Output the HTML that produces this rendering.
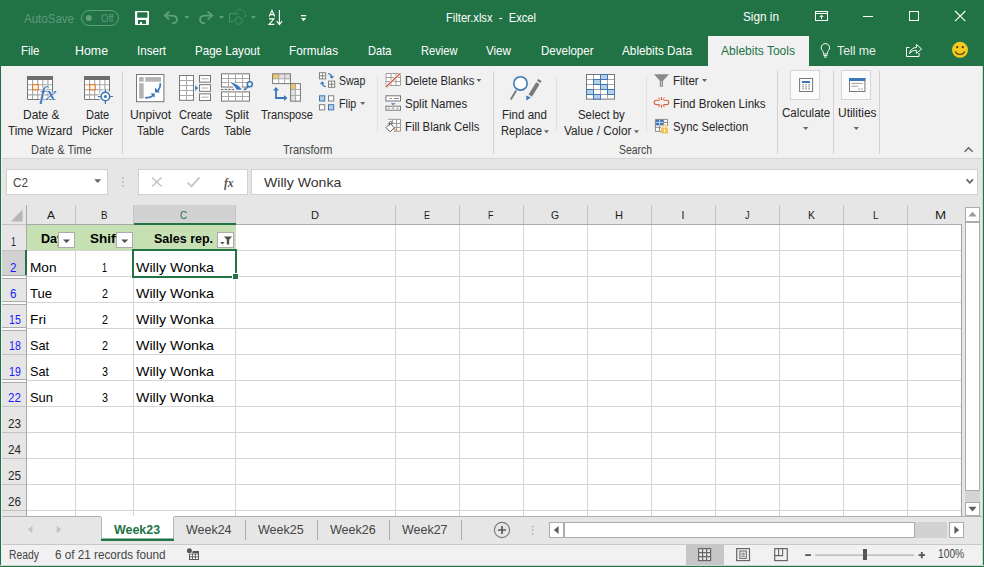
<!DOCTYPE html>
<html><head><meta charset="utf-8"><title>Filter.xlsx - Excel</title>
<style>
html,body{margin:0;padding:0;}
body{width:984px;height:567px;overflow:hidden;position:relative;background:#e6e6e6;font-family:"Liberation Sans",sans-serif;}
.t{position:absolute;white-space:pre;line-height:1em;transform-origin:0 0;}
.r{position:absolute;box-sizing:border-box;}
svg{position:absolute;overflow:visible;}
</style></head><body>
<div class="r" style="left:0px;top:0px;width:984px;height:66px;background:#217346;"></div>
<div class="r" style="left:0px;top:66px;width:984px;height:93px;background:#f1f1f1;"></div>
<div class="r" style="left:0px;top:158px;width:984px;height:1px;background:#d6d6d6;"></div>
<div class="r" style="left:0px;top:159px;width:984px;height:46px;background:#e6e6e6;"></div>
<div class="r" style="left:708px;top:36px;width:101px;height:30px;background:#f1f1f1;"></div>
<span class="t" style="left:24.00px;top:12.00px;font-size:13px;color:#5f9a7b;transform:scaleX(0.8869);">AutoSave</span>
<span class="t" style="left:100.50px;top:13.19px;font-size:11px;color:#5f9a7b;transform:scaleX(0.8621);">Off</span>
<span class="t" style="left:446.00px;top:10.90px;font-size:13px;color:#fff;transform:scaleX(0.8592);">Filter.xlsx  -  Excel</span>
<span class="t" style="left:743.00px;top:9.90px;font-size:13px;color:#fff;transform:scaleX(0.9057);">Sign in</span>
<span class="t" style="left:21.00px;top:44.00px;font-size:13px;color:#fff;transform:scaleX(0.8810);">File</span>
<span class="t" style="left:75.00px;top:44.00px;font-size:13px;color:#fff;transform:scaleX(0.9531);">Home</span>
<span class="t" style="left:137.00px;top:44.00px;font-size:13px;color:#fff;transform:scaleX(0.8923);">Insert</span>
<span class="t" style="left:195.00px;top:44.00px;font-size:13px;color:#fff;transform:scaleX(0.8904);">Page Layout</span>
<span class="t" style="left:289.00px;top:44.00px;font-size:13px;color:#fff;transform:scaleX(0.9053);">Formulas</span>
<span class="t" style="left:367.50px;top:44.00px;font-size:13px;color:#fff;transform:scaleX(0.8545);">Data</span>
<span class="t" style="left:420.50px;top:44.00px;font-size:13px;color:#fff;transform:scaleX(0.8538);">Review</span>
<span class="t" style="left:486.00px;top:44.00px;font-size:13px;color:#fff;transform:scaleX(0.8929);">View</span>
<span class="t" style="left:540.50px;top:44.00px;font-size:13px;color:#fff;transform:scaleX(0.8861);">Developer</span>
<span class="t" style="left:622.00px;top:44.00px;font-size:13px;color:#fff;transform:scaleX(0.9047);">Ablebits Data</span>
<span class="t" style="left:721.00px;top:44.00px;font-size:13px;color:#217346;transform:scaleX(0.9250);">Ablebits Tools</span>
<span class="t" style="left:837.40px;top:44.00px;font-size:13px;color:#e4efe8;transform:scaleX(0.9459);">Tell me</span>
<span class="t" style="left:22.50px;top:108.59px;font-size:12px;color:#262626;transform:scaleX(0.9966);">Date &amp;</span>
<span class="t" style="left:8.00px;top:125.24px;font-size:12px;color:#262626;transform:scaleX(0.9645);">Time Wizard</span>
<span class="t" style="left:85.75px;top:108.59px;font-size:12px;color:#262626;transform:scaleX(0.9163);">Date</span>
<span class="t" style="left:82.00px;top:125.24px;font-size:12px;color:#262626;transform:scaleX(0.9288);">Picker</span>
<span class="t" style="left:30.50px;top:143.59px;font-size:12px;color:#444;transform:scaleX(0.9167);">Date &amp; Time</span>
<span class="t" style="left:129.50px;top:108.59px;font-size:12px;color:#262626;transform:scaleX(1.0123);">Unpivot</span>
<span class="t" style="left:136.75px;top:125.24px;font-size:12px;color:#262626;transform:scaleX(0.9391);">Table</span>
<span class="t" style="left:178.75px;top:108.59px;font-size:12px;color:#262626;transform:scaleX(0.9236);">Create</span>
<span class="t" style="left:180.50px;top:125.24px;font-size:12px;color:#262626;transform:scaleX(0.9062);">Cards</span>
<span class="t" style="left:225.00px;top:108.59px;font-size:12px;color:#262626;transform:scaleX(1.0267);">Split</span>
<span class="t" style="left:223.50px;top:125.24px;font-size:12px;color:#262626;transform:scaleX(0.9391);">Table</span>
<span class="t" style="left:261.00px;top:108.59px;font-size:12px;color:#262626;transform:scaleX(0.9244);">Transpose</span>
<span class="t" style="left:338.75px;top:74.84px;font-size:12px;color:#262626;transform:scaleX(0.8750);">Swap</span>
<span class="t" style="left:338.75px;top:97.84px;font-size:12px;color:#262626;transform:scaleX(0.8903);">Flip</span>
<span class="t" style="left:283.00px;top:143.59px;font-size:12px;color:#444;transform:scaleX(0.9124);">Transform</span>
<span class="t" style="left:404.50px;top:74.84px;font-size:12px;color:#262626;transform:scaleX(0.9358);">Delete Blanks</span>
<span class="t" style="left:404.50px;top:97.84px;font-size:12px;color:#262626;transform:scaleX(0.9614);">Split Names</span>
<span class="t" style="left:404.50px;top:120.59px;font-size:12px;color:#262626;transform:scaleX(0.9444);">Fill Blank Cells</span>
<span class="t" style="left:502.00px;top:108.59px;font-size:12px;color:#262626;transform:scaleX(0.9626);">Find and</span>
<span class="t" style="left:500.50px;top:125.24px;font-size:12px;color:#262626;transform:scaleX(0.9318);">Replace</span>
<span class="t" style="left:578.00px;top:108.59px;font-size:12px;color:#262626;transform:scaleX(0.9468);">Select by</span>
<span class="t" style="left:563.50px;top:125.24px;font-size:12px;color:#262626;transform:scaleX(0.9854);">Value / Color</span>
<span class="t" style="left:673.00px;top:74.84px;font-size:12px;color:#262626;transform:scaleX(0.9615);">Filter</span>
<span class="t" style="left:673.00px;top:97.84px;font-size:12px;color:#262626;transform:scaleX(0.9646);">Find Broken Links</span>
<span class="t" style="left:673.00px;top:120.59px;font-size:12px;color:#262626;transform:scaleX(0.9474);">Sync Selection</span>
<span class="t" style="left:618.50px;top:143.59px;font-size:12px;color:#444;transform:scaleX(0.8684);">Search</span>
<span class="t" style="left:781.75px;top:106.84px;font-size:12px;color:#262626;transform:scaleX(0.9650);">Calculate</span>
<span class="t" style="left:837.50px;top:106.84px;font-size:12px;color:#262626;transform:scaleX(0.9968);">Utilities</span>
<div class="r" style="left:122px;top:71px;width:1px;height:83px;background:#d2d2d2;"></div>
<div class="r" style="left:493px;top:71px;width:1px;height:83px;background:#d2d2d2;"></div>
<div class="r" style="left:777px;top:71px;width:1px;height:83px;background:#d2d2d2;"></div>
<div class="r" style="left:833px;top:71px;width:1px;height:83px;background:#d2d2d2;"></div>
<div class="r" style="left:879px;top:71px;width:1px;height:83px;background:#d2d2d2;"></div>
<div class="r" style="left:377px;top:76px;width:1px;height:56px;background:#e1e1e1;"></div>
<div class="r" style="left:556px;top:76px;width:1px;height:56px;background:#e1e1e1;"></div>
<div class="r" style="left:646px;top:76px;width:1px;height:56px;background:#e1e1e1;"></div>
<div class="r" style="left:790px;top:70px;width:30px;height:30px;background:#fbfbfb;border:1px solid #d4d4d4;"></div>
<div class="r" style="left:841px;top:70px;width:30px;height:30px;background:#fbfbfb;border:1px solid #d4d4d4;"></div>
<div class="r" style="left:6px;top:169px;width:102px;height:26px;background:#fff;border:1px solid #d0d0d0;"></div>
<div class="r" style="left:138px;top:169px;width:110px;height:26px;background:#fff;border:1px solid #d0d0d0;"></div>
<div class="r" style="left:251px;top:169px;width:727px;height:26px;background:#fff;border:1px solid #d0d0d0;"></div>
<span class="t" style="left:13.00px;top:176.00px;font-size:13px;color:#444;transform:scaleX(0.9023);">C2</span>
<span class="t" style="left:263.50px;top:176.07px;font-size:13.5px;color:#333;transform:scaleX(1.0455);">Willy Wonka</span>
<div class="r" style="left:2px;top:205px;width:960px;height:311px;background:#fff;"></div>
<div class="r" style="left:2px;top:205px;width:960px;height:19px;background:#e6e6e6;"></div>
<div class="r" style="left:2px;top:224px;width:24px;height:292px;background:#e6e6e6;"></div>
<div class="r" style="left:134px;top:205px;width:101px;height:18px;background:#d2d2d2;"></div>
<div class="r" style="left:75px;top:205px;width:1px;height:19px;background:#c3c3c3;"></div>
<div class="r" style="left:133px;top:205px;width:1px;height:19px;background:#c3c3c3;"></div>
<div class="r" style="left:235px;top:205px;width:1px;height:19px;background:#c3c3c3;"></div>
<div class="r" style="left:395px;top:205px;width:1px;height:19px;background:#c3c3c3;"></div>
<div class="r" style="left:459px;top:205px;width:1px;height:19px;background:#c3c3c3;"></div>
<div class="r" style="left:523px;top:205px;width:1px;height:19px;background:#c3c3c3;"></div>
<div class="r" style="left:587px;top:205px;width:1px;height:19px;background:#c3c3c3;"></div>
<div class="r" style="left:651px;top:205px;width:1px;height:19px;background:#c3c3c3;"></div>
<div class="r" style="left:715px;top:205px;width:1px;height:19px;background:#c3c3c3;"></div>
<div class="r" style="left:779px;top:205px;width:1px;height:19px;background:#c3c3c3;"></div>
<div class="r" style="left:843px;top:205px;width:1px;height:19px;background:#c3c3c3;"></div>
<div class="r" style="left:907px;top:205px;width:1px;height:19px;background:#c3c3c3;"></div>
<div class="r" style="left:27px;top:225px;width:208px;height:25px;background:#c6e0b4;"></div>
<div class="r" style="left:75px;top:250px;width:1px;height:266px;background:#d4d4d4;"></div>
<div class="r" style="left:133px;top:250px;width:1px;height:266px;background:#d4d4d4;"></div>
<div class="r" style="left:235px;top:225px;width:1px;height:291px;background:#d4d4d4;"></div>
<div class="r" style="left:395px;top:225px;width:1px;height:291px;background:#d4d4d4;"></div>
<div class="r" style="left:459px;top:225px;width:1px;height:291px;background:#d4d4d4;"></div>
<div class="r" style="left:523px;top:225px;width:1px;height:291px;background:#d4d4d4;"></div>
<div class="r" style="left:587px;top:225px;width:1px;height:291px;background:#d4d4d4;"></div>
<div class="r" style="left:651px;top:225px;width:1px;height:291px;background:#d4d4d4;"></div>
<div class="r" style="left:715px;top:225px;width:1px;height:291px;background:#d4d4d4;"></div>
<div class="r" style="left:779px;top:225px;width:1px;height:291px;background:#d4d4d4;"></div>
<div class="r" style="left:843px;top:225px;width:1px;height:291px;background:#d4d4d4;"></div>
<div class="r" style="left:907px;top:225px;width:1px;height:291px;background:#d4d4d4;"></div>
<div class="r" style="left:2px;top:250px;width:24px;height:1px;background:#c3c3c3;"></div>
<div class="r" style="left:235px;top:250px;width:727px;height:1px;background:#d4d4d4;"></div>
<div class="r" style="left:2px;top:276px;width:24px;height:1px;background:#c3c3c3;"></div>
<div class="r" style="left:27px;top:276px;width:935px;height:1px;background:#d4d4d4;"></div>
<div class="r" style="left:2px;top:302px;width:24px;height:1px;background:#c3c3c3;"></div>
<div class="r" style="left:27px;top:302px;width:935px;height:1px;background:#d4d4d4;"></div>
<div class="r" style="left:2px;top:328px;width:24px;height:1px;background:#c3c3c3;"></div>
<div class="r" style="left:27px;top:328px;width:935px;height:1px;background:#d4d4d4;"></div>
<div class="r" style="left:2px;top:354px;width:24px;height:1px;background:#c3c3c3;"></div>
<div class="r" style="left:27px;top:354px;width:935px;height:1px;background:#d4d4d4;"></div>
<div class="r" style="left:2px;top:380px;width:24px;height:1px;background:#c3c3c3;"></div>
<div class="r" style="left:27px;top:380px;width:935px;height:1px;background:#d4d4d4;"></div>
<div class="r" style="left:2px;top:406px;width:24px;height:1px;background:#c3c3c3;"></div>
<div class="r" style="left:27px;top:406px;width:935px;height:1px;background:#d4d4d4;"></div>
<div class="r" style="left:2px;top:432px;width:24px;height:1px;background:#c3c3c3;"></div>
<div class="r" style="left:27px;top:432px;width:935px;height:1px;background:#d4d4d4;"></div>
<div class="r" style="left:2px;top:458px;width:24px;height:1px;background:#c3c3c3;"></div>
<div class="r" style="left:27px;top:458px;width:935px;height:1px;background:#d4d4d4;"></div>
<div class="r" style="left:2px;top:484px;width:24px;height:1px;background:#c3c3c3;"></div>
<div class="r" style="left:27px;top:484px;width:935px;height:1px;background:#d4d4d4;"></div>
<div class="r" style="left:2px;top:510px;width:24px;height:1px;background:#c3c3c3;"></div>
<div class="r" style="left:27px;top:510px;width:935px;height:1px;background:#d4d4d4;"></div>
<div class="r" style="left:27px;top:250px;width:208px;height:1px;background:#d4d4d4;"></div>
<div class="r" style="left:26px;top:205px;width:1px;height:311px;background:#a9a9a9;"></div>
<div class="r" style="left:2px;top:224px;width:24px;height:1px;background:#c3c3c3;"></div>
<div class="r" style="left:26px;top:224px;width:936px;height:1px;background:#a9a9a9;"></div>
<div class="r" style="left:961px;top:224px;width:1px;height:293px;background:#a0a0a0;"></div>
<div class="r" style="left:134px;top:223px;width:102px;height:2px;background:#217346;"></div>
<div class="r" style="left:2px;top:516px;width:982px;height:1px;background:#b0b0b0;"></div>
<span class="t" style="left:47.00px;top:210.21px;font-size:11.8px;color:#1c1c1c;transform:scaleX(1.0159);">A</span>
<span class="t" style="left:101.15px;top:210.21px;font-size:11.8px;color:#1c1c1c;transform:scaleX(0.8254);">B</span>
<span class="t" style="left:180.30px;top:210.21px;font-size:11.8px;color:#217346;transform:scaleX(0.8235);">C</span>
<span class="t" style="left:311.00px;top:210.21px;font-size:11.8px;color:#1c1c1c;transform:scaleX(0.9412);">D</span>
<span class="t" style="left:424.00px;top:210.21px;font-size:11.8px;color:#1c1c1c;transform:scaleX(0.7619);">E</span>
<span class="t" style="left:488.30px;top:210.21px;font-size:11.8px;color:#1c1c1c;transform:scaleX(0.7579);">F</span>
<span class="t" style="left:551.00px;top:210.21px;font-size:11.8px;color:#1c1c1c;transform:scaleX(0.8767);">G</span>
<span class="t" style="left:615.00px;top:210.21px;font-size:11.8px;color:#1c1c1c;transform:scaleX(0.9412);">H</span>
<span class="t" style="left:682.25px;top:210.21px;font-size:11.8px;color:#1c1c1c;font-weight:bold;transform:scaleX(0.5846);">I</span>
<span class="t" style="left:745.20px;top:210.21px;font-size:11.8px;color:#1c1c1c;transform:scaleX(0.7830);">J</span>
<span class="t" style="left:807.50px;top:210.21px;font-size:11.8px;color:#1c1c1c;transform:scaleX(0.8889);">K</span>
<span class="t" style="left:873.25px;top:210.21px;font-size:11.8px;color:#1c1c1c;transform:scaleX(0.8462);">L</span>
<span class="t" style="left:934.50px;top:210.21px;font-size:11.8px;color:#1c1c1c;transform:scaleX(1.1282);">M</span>
<span class="t" style="left:10.50px;top:236.12px;font-size:12.5px;color:#262626;transform:scaleX(0.7143);">1</span>
<div class="r" style="left:2px;top:251px;width:24px;height:24px;background:#d2d2d2;"></div>
<div class="r" style="left:25px;top:250px;width:2px;height:25px;background:#217346;"></div>
<span class="t" style="left:9.75px;top:262.12px;font-size:12.5px;color:#1a1aff;transform:scaleX(0.9286);">2</span>
<span class="t" style="left:9.75px;top:288.12px;font-size:12.5px;color:#1a1aff;transform:scaleX(0.9286);">6</span>
<span class="t" style="left:8.72px;top:314.12px;font-size:12.5px;color:#1a1aff;transform:scaleX(0.8468);">15</span>
<span class="t" style="left:8.72px;top:340.12px;font-size:12.5px;color:#1a1aff;transform:scaleX(0.8468);">18</span>
<span class="t" style="left:8.72px;top:366.12px;font-size:12.5px;color:#1a1aff;transform:scaleX(0.8468);">19</span>
<span class="t" style="left:7.50px;top:392.12px;font-size:12.5px;color:#1a1aff;transform:scaleX(0.9369);">22</span>
<span class="t" style="left:7.50px;top:418.12px;font-size:12.5px;color:#262626;transform:scaleX(0.9369);">23</span>
<span class="t" style="left:7.50px;top:444.12px;font-size:12.5px;color:#262626;transform:scaleX(0.9369);">24</span>
<span class="t" style="left:7.50px;top:470.12px;font-size:12.5px;color:#262626;transform:scaleX(0.9369);">25</span>
<span class="t" style="left:7.50px;top:496.12px;font-size:12.5px;color:#262626;transform:scaleX(0.9369);">26</span>
<div class="r" style="left:2px;top:327px;width:24px;height:1px;background:#ababab;"></div>
<div class="r" style="left:2px;top:328px;width:24px;height:2px;background:#fbfbfb;"></div>
<div class="r" style="left:2px;top:330px;width:24px;height:1px;background:#ababab;"></div>
<div class="r" style="left:2px;top:379px;width:24px;height:1px;background:#ababab;"></div>
<div class="r" style="left:2px;top:380px;width:24px;height:2px;background:#fbfbfb;"></div>
<div class="r" style="left:2px;top:382px;width:24px;height:1px;background:#ababab;"></div>
<div class="r" style="left:2px;top:275px;width:24px;height:1px;background:#ababab;"></div>
<div class="r" style="left:2px;top:276px;width:24px;height:2px;background:#fbfbfb;"></div>
<div class="r" style="left:2px;top:278px;width:24px;height:1px;background:#ababab;"></div>
<div class="r" style="left:2px;top:301px;width:24px;height:1px;background:#ababab;"></div>
<div class="r" style="left:2px;top:302px;width:24px;height:2px;background:#fbfbfb;"></div>
<div class="r" style="left:2px;top:304px;width:24px;height:1px;background:#ababab;"></div>
<span class="t" style="left:29.50px;top:261.00px;font-size:13px;color:#000;transform:scaleX(1.0495);">Mon</span>
<span class="t" style="left:102.00px;top:261.00px;font-size:13px;color:#000;transform:scaleX(0.6897);">1</span>
<span class="t" style="left:136.00px;top:261.00px;font-size:13px;color:#000;transform:scaleX(1.0947);">Willy Wonka</span>
<span class="t" style="left:29.50px;top:287.00px;font-size:13px;color:#000;transform:scaleX(1.0057);">Tue</span>
<span class="t" style="left:101.50px;top:287.00px;font-size:13px;color:#000;transform:scaleX(0.8276);">2</span>
<span class="t" style="left:136.00px;top:287.00px;font-size:13px;color:#000;transform:scaleX(1.0947);">Willy Wonka</span>
<span class="t" style="left:29.50px;top:313.00px;font-size:13px;color:#000;transform:scaleX(1.0579);">Fri</span>
<span class="t" style="left:101.50px;top:313.00px;font-size:13px;color:#000;transform:scaleX(0.8276);">2</span>
<span class="t" style="left:136.00px;top:313.00px;font-size:13px;color:#000;transform:scaleX(1.0947);">Willy Wonka</span>
<span class="t" style="left:29.50px;top:339.00px;font-size:13px;color:#000;transform:scaleX(0.9744);">Sat</span>
<span class="t" style="left:101.50px;top:339.00px;font-size:13px;color:#000;transform:scaleX(0.8276);">2</span>
<span class="t" style="left:136.00px;top:339.00px;font-size:13px;color:#000;transform:scaleX(1.0947);">Willy Wonka</span>
<span class="t" style="left:29.50px;top:365.00px;font-size:13px;color:#000;transform:scaleX(0.9744);">Sat</span>
<span class="t" style="left:101.50px;top:365.00px;font-size:13px;color:#000;transform:scaleX(0.8276);">3</span>
<span class="t" style="left:136.00px;top:365.00px;font-size:13px;color:#000;transform:scaleX(1.0947);">Willy Wonka</span>
<span class="t" style="left:29.50px;top:391.00px;font-size:13px;color:#000;transform:scaleX(0.9946);">Sun</span>
<span class="t" style="left:101.50px;top:391.00px;font-size:13px;color:#000;transform:scaleX(0.8276);">3</span>
<span class="t" style="left:136.00px;top:391.00px;font-size:13px;color:#000;transform:scaleX(1.0947);">Willy Wonka</span>
<div class="r" style="left:27px;top:225px;width:31px;height:25px;overflow:hidden;">
<span class="t" style="left:13.50px;top:7.00px;font-size:13px;color:#000;font-weight:bold;transform:scaleX(0.9634);">Day</span>
</div>
<div class="r" style="left:76px;top:225px;width:41px;height:25px;overflow:hidden;">
<span class="t" style="left:14.00px;top:7.00px;font-size:13px;color:#000;font-weight:bold;transform:scaleX(1.0390);">Shift</span>
</div>
<span class="t" style="left:154.00px;top:232.00px;font-size:13px;color:#000;font-weight:bold;transform:scaleX(0.9613);">Sales rep.</span>
<div class="r" style="left:58px;top:232px;width:17px;height:16px;background:#fcfcfc;border:1px solid #ababab;"></div>
<div class="r" style="left:116px;top:232px;width:17px;height:16px;background:#fcfcfc;border:1px solid #ababab;"></div>
<div class="r" style="left:217px;top:232px;width:17px;height:16px;background:#fcfcfc;border:1px solid #ababab;"></div>
<div class="r" style="left:132px;top:249px;width:105px;height:29px;background:transparent;border:2px solid #217346;"></div>
<div class="r" style="left:232px;top:273px;width:7px;height:7px;background:#217346;border:1px solid #fff;"></div>
<div class="r" style="left:2px;top:517px;width:982px;height:27px;background:#e6e6e6;"></div>
<div class="r" style="left:101px;top:516px;width:73px;height:23px;background:#fff;"></div>
<div class="r" style="left:101px;top:517px;width:1px;height:22px;background:#b4b4b4;"></div>
<div class="r" style="left:173px;top:517px;width:1px;height:22px;background:#b4b4b4;"></div>
<div class="r" style="left:101px;top:538px;width:73px;height:1px;background:#8fb8a1;"></div>
<div class="r" style="left:101px;top:539px;width:73px;height:2px;background:#217346;"></div>
<span class="t" style="left:114.00px;top:522.57px;font-size:13.5px;color:#217346;font-weight:bold;transform:scaleX(0.9200);">Week23</span>
<span class="t" style="left:186.00px;top:522.57px;font-size:13.5px;color:#444;transform:scaleX(0.9239);">Week24</span>
<span class="t" style="left:258.00px;top:522.57px;font-size:13.5px;color:#444;transform:scaleX(0.9289);">Week25</span>
<span class="t" style="left:330.00px;top:522.57px;font-size:13.5px;color:#444;transform:scaleX(0.9289);">Week26</span>
<span class="t" style="left:402.00px;top:522.57px;font-size:13.5px;color:#444;transform:scaleX(0.9239);">Week27</span>
<div class="r" style="left:245px;top:520px;width:1px;height:20px;background:#ababab;"></div>
<div class="r" style="left:317px;top:520px;width:1px;height:20px;background:#ababab;"></div>
<div class="r" style="left:389px;top:520px;width:1px;height:20px;background:#ababab;"></div>
<div class="r" style="left:461px;top:520px;width:1px;height:20px;background:#ababab;"></div>
<div class="r" style="left:564px;top:522px;width:383px;height:16px;background:#d2d2d2;"></div>
<div class="r" style="left:549px;top:522px;width:15px;height:16px;background:#fff;border:1px solid #ababab;"></div>
<div class="r" style="left:564px;top:522px;width:351px;height:16px;background:#fff;border:1px solid #ababab;"></div>
<div class="r" style="left:949px;top:522px;width:15px;height:16px;background:#fff;border:1px solid #ababab;"></div>
<div class="r" style="left:965px;top:207px;width:15px;height:309px;background:#d4d4d4;"></div>
<div class="r" style="left:965px;top:207px;width:15px;height:15px;background:#fff;border:1px solid #ababab;"></div>
<div class="r" style="left:965px;top:222px;width:15px;height:269px;background:#fff;border:1px solid #ababab;"></div>
<div class="r" style="left:965px;top:502px;width:15px;height:14px;background:#fff;border:1px solid #ababab;"></div>
<div class="r" style="left:0px;top:544px;width:984px;height:1px;background:#c8c8c8;"></div>
<div class="r" style="left:0px;top:545px;width:984px;height:22px;background:#f1f1f1;"></div>
<div class="r" style="left:686px;top:545px;width:38px;height:21px;background:#c6c6c6;"></div>
<span class="t" style="left:9.00px;top:548.84px;font-size:12px;color:#444;transform:scaleX(0.8633);">Ready</span>
<span class="t" style="left:55.00px;top:548.84px;font-size:12px;color:#444;transform:scaleX(0.9746);">6 of 21 records found</span>
<span class="t" style="left:937.50px;top:548.34px;font-size:12px;color:#444;transform:scaleX(0.8537);">100%</span>
<svg width="984" height="567" viewBox="0 0 984 567" style="left:0;top:0;"><rect x="81.5" y="10.5" width="37" height="15" rx="7.5" fill="none" stroke="#5f9f7e" stroke-width="1"/>
<circle cx="88.8" cy="18" r="3" fill="#5f9f7e"/>
<rect x="135" y="11" width="14" height="14" rx="0.8" fill="#fff"/>
<rect x="137.2" y="12.3" width="10.2" height="5.4" fill="#217346"/>
<rect x="138" y="20" width="8" height="3.9" fill="#217346"/>
<rect x="140" y="22" width="2" height="2" fill="#fff"/>
<path d="M169.3 11.6 L164.8 15.6 L169.3 19.6" fill="none" stroke="#5f9f7e" stroke-width="1.9"/>
<path d="M165 15.6 H171.5 C179 15.6 178.5 23.4 172 23.4" fill="none" stroke="#5f9f7e" stroke-width="1.9"/>
<path d="M184.3 16 h5 l-2.5 3 z" fill="#5f9f7e"/>
<path d="M207.7 11.6 L212.2 15.6 L207.7 19.6" fill="none" stroke="#5f9f7e" stroke-width="1.9"/>
<path d="M212 15.6 H205.5 C198 15.6 198.5 23.4 205 23.4" fill="none" stroke="#5f9f7e" stroke-width="1.9"/>
<path d="M219 16 h5 l-2.5 3 z" fill="#5f9f7e"/>
<path d="M233 21.7 H229.5 V13.7 H238" fill="none" stroke="#4f9070" stroke-width="1"/>
<path d="M236 11.5 A5.3 5.3 0 1 1 244.5 18" fill="none" stroke="#4f9070" stroke-width="1" stroke-dasharray="2.2 1"/>
<path d="M238.5 16.2 L243 20.6 L238.5 25 L234 20.6 Z" fill="none" stroke="#4f9070" stroke-width="1"/>
<path d="M250.9 16 h5 l-2.5 3 z" fill="#5f9f7e"/>
<path d="M269.2 16.6 L272 10.4 L274.8 16.6 M270.2 14.6 H273.8" fill="none" stroke="#fff" stroke-width="1.1"/>
<path d="M269 18.9 H274 L269 24.4 H274.3" fill="none" stroke="#fff" stroke-width="1.1"/>
<path d="M279.4 10 V24.3 M276.7 21.2 L279.4 24.6 L282.1 21.2" fill="none" stroke="#fff" stroke-width="1.1"/>
<rect x="301" y="15" width="5.2" height="1.3" fill="#fff"/>
<path d="M301 18 h5.2 l-2.6 3.2 z" fill="#fff"/>
<rect x="815.5" y="11.5" width="12" height="9" fill="none" stroke="#fff" stroke-width="1"/>
<path d="M815.5 13.5 H827.5 M821.5 19 V15.3 M819.7 17 L821.5 15.2 L823.3 17" fill="none" stroke="#fff" stroke-width="1"/>
<rect x="863" y="16" width="10" height="1" fill="#fff"/>
<rect x="909.5" y="11.5" width="9" height="9" fill="none" stroke="#fff" stroke-width="1"/>
<path d="M955 11 L965.4 21.2 M965.4 11 L955 21.2" fill="none" stroke="#fff" stroke-width="1.1"/>
<path d="M823.4 54 V52.6 C823.4 51 821.2 50.2 821.2 47.8 A4.2 4.2 0 0 1 829.6 47.8 C829.6 50.2 827.4 51 827.4 52.6 V54 Z" fill="none" stroke="#fff" stroke-width="1"/>
<path d="M823.4 55.5 H827.4 M824 57 H826.8" fill="none" stroke="#fff" stroke-width="1"/>
<path d="M909.5 47.5 H906.5 V56.5 H919 V53" fill="none" stroke="#fff" stroke-width="1"/>
<path d="M909.6 53.6 C910.2 49.4 913 47.6 916.4 47.6 V44.4 L921.6 49 L916.4 53.4 V50.4 C913.4 50.2 911.4 51 909.6 53.6 Z" fill="none" stroke="#fff" stroke-width="1" stroke-linejoin="round"/>
<circle cx="960" cy="49.8" r="8" fill="#f7c81e"/>
<circle cx="957.2" cy="47.2" r="1.1" fill="#4a3b00"/><circle cx="962.8" cy="47.2" r="1.1" fill="#4a3b00"/>
<path d="M955.3 51.5 C957 55.4 963 55.4 964.7 51.5" fill="none" stroke="#4a3b00" stroke-width="1.1"/>
<path d="M94.2 179.2 h7 l-3.5 3.8 z" fill="#666"/>
<rect x="122" y="177.39999999999998" width="1.6" height="1.6" fill="#b4b4b4"/>
<rect x="122" y="181.2" width="1.6" height="1.6" fill="#b4b4b4"/>
<rect x="122" y="185.0" width="1.6" height="1.6" fill="#b4b4b4"/>
<path d="M152 177.4 L161.6 186.6 M161.6 177.4 L152 186.6" fill="none" stroke="#c2c2c2" stroke-width="1.4"/>
<path d="M187.6 182.6 L191.6 186.4 L199.4 177.4" fill="none" stroke="#c8c8c8" stroke-width="2"/>
<path d="M966.6 179.4 L969.8 182.8 L973 179.4" fill="none" stroke="#666" stroke-width="1.8"/>
<path d="M964.6 151.8 L968.6 147.8 L972.6 151.8" fill="none" stroke="#666" stroke-width="1.5"/></svg>
<svg width="984" height="567" viewBox="0 0 984 567" style="left:0;top:0;"><rect x="27" y="76" width="26" height="24" fill="#fff"/>
<path d="M32.60 80 V100 M37.70 80 V100 M42.80 80 V100 M47.90 80 V100 M27 84.70 H53 M27 89.80 H53 M27 94.90 H53 " fill="none" stroke="#a6a6a6" stroke-width="1.1"/>
<rect x="27" y="76" width="26" height="4" fill="#6e6e6e"/>
<path d="M27.5 80 V99.5 H52.5 V80" fill="none" stroke="#777" stroke-width="1"/>
<rect x="32.6" y="84.6" width="5.6" height="5.2" fill="#fff" stroke="#e07b28" stroke-width="1.2"/>
<g transform="translate(39.2,99.8) scale(1.28,1)"><text x="0" y="0" style="font-family:'Liberation Serif',serif;font-style:italic;font-size:18.7px;" fill="#f1f1f1" stroke="#f1f1f1" stroke-width="1.3" stroke-linejoin="round">fx</text>
<text x="0" y="0" style="font-family:'Liberation Serif',serif;font-style:italic;font-size:18.7px;" fill="#3c78b8">fx</text></g>
<rect x="84" y="76" width="26" height="24" fill="#fff"/>
<path d="M89.60 80 V100 M94.70 80 V100 M99.80 80 V100 M104.90 80 V100 M84 84.70 H110 M84 89.80 H110 M84 94.90 H110 " fill="none" stroke="#a6a6a6" stroke-width="1.1"/>
<rect x="84" y="76" width="26" height="4" fill="#6e6e6e"/>
<path d="M84.5 80 V99.5 H109.5 V80" fill="none" stroke="#777" stroke-width="1"/>
<rect x="89.6" y="84.6" width="5.6" height="5.2" fill="#fff" stroke="#e07b28" stroke-width="1.2"/>
<circle cx="105.4" cy="96.5" r="6.6" fill="#f1f1f1"/>
<path d="M105.4 89 V104 M97.8 96.5 H113" fill="none" stroke="#f1f1f1" stroke-width="3.4"/>
<path d="M105.4 89 V104 M97.8 96.5 H113" fill="none" stroke="#3c78b8" stroke-width="1.2"/>
<circle cx="105.4" cy="96.5" r="4.3" fill="#fff" stroke="#3c78b8" stroke-width="1.6"/>
<circle cx="105.4" cy="96.5" r="1.5" fill="#3c78b8"/>
<rect x="136.5" y="74.5" width="27.4" height="27.2" fill="#fff" stroke="#777777" stroke-width="1"/>
<rect x="139.1" y="77.1" width="4.6" height="4.6" fill="#b3b3b3"/>
<rect x="145.2" y="77.1" width="15.8" height="4.6" fill="#b3b3b3"/>
<rect x="139.1" y="83.2" width="4.6" height="15.3" fill="#b3b3b3"/>
<path d="M160.3 83.2 C160.3 87.4 159.2 89.6 157.4 91" fill="none" stroke="#3c78b8" stroke-width="1.7"/>
<path d="M154.9 87.6 L155.1 92.6 L160 92.6 Z" fill="#3c78b8"/>
<path d="M145.2 97.9 C149 97.9 151.6 96.8 153 95.4" fill="none" stroke="#3c78b8" stroke-width="1.7"/>
<path d="M150.6 93.2 L154.8 93.4 L154.6 97.8 Z" fill="#3c78b8"/>
<rect x="179.5" y="75.5" width="14" height="24.8" fill="#fff" stroke="#777777" stroke-width="1"/>
<path d="M186.50 76 V99.8 M180 80.50 H193 M180 85.50 H193 M180 90.50 H193 M180 95.50 H193 " fill="none" stroke="#a8a8a8" stroke-width="1"/>
<path d="M195.2 85.2 L198 88.1 L195.2 91 Z" fill="#3c78b8"/>
<rect x="199.5" y="75.5" width="11" height="6.6" fill="#fff" stroke="#777777" stroke-width="1"/>
<path d="M201.4 78.8 H208.4" stroke="#a8a8a8" stroke-width="1"/>
<rect x="199.5" y="84.7" width="11" height="6.6" fill="#fff" stroke="#777777" stroke-width="1"/>
<path d="M201.4 88.0 H208.4" stroke="#a8a8a8" stroke-width="1"/>
<rect x="199.5" y="93.9" width="11" height="6.6" fill="#fff" stroke="#777777" stroke-width="1"/>
<path d="M201.4 97.2 H208.4" stroke="#a8a8a8" stroke-width="1"/>
<rect x="221.5" y="73.8" width="28" height="13.2" fill="#fff" stroke="#777777" stroke-width="1"/>
<path d="M228.50 74.3 V86.5 M235.50 74.3 V86.5 M242.50 74.3 V86.5 M222 78.50 H249 M222 82.50 H249 " fill="none" stroke="#a8a8a8" stroke-width="1"/>
<rect x="221.5" y="91.9" width="28" height="9.2" fill="#fff" stroke="#777777" stroke-width="1"/>
<path d="M228.50 92.4 V100.60000000000001 M235.50 92.4 V100.60000000000001 M242.50 92.4 V100.60000000000001 M222 96.50 H249 " fill="none" stroke="#a8a8a8" stroke-width="1"/>
<path d="M221 89.5 H240" stroke="#707070" stroke-width="1" stroke-dasharray="2.4 1.2"/>
<path d="M229.4 81.6 C233 82.6 239.6 84.6 242.6 90 L236 90 C235 87 232.4 84.4 229.4 81.6 Z" fill="#fff" stroke="#fff" stroke-width="1.6"/>
<path d="M230 82 C233 82.8 239 84.8 241.8 89.7 L236.6 89.7 C235.4 87 233 84.6 230 82 Z" fill="#3c78b8"/>
<path d="M243.8 89.6 C246 89.6 247 87.8 248 86.4" fill="none" stroke="#3c78b8" stroke-width="1.6"/>
<circle cx="249.8" cy="84.3" r="2.5" fill="#fff" stroke="#3c78b8" stroke-width="1.6"/>
<rect x="272.6" y="73.8" width="17.8" height="9.8" fill="#fff"/>
<rect x="273" y="74" width="5.6" height="4.8" fill="#f2c66b"/>
<rect x="279" y="74" width="11" height="4.8" fill="#e2e2e2"/>
<path d="M278.7 74 V83.5 M284.7 74 V83.5 M273 78.8 H290" stroke="#a8a8a8" stroke-width="1" fill="none"/>
<rect x="272.6" y="73.8" width="17.8" height="9.8" fill="none" stroke="#777777" stroke-width="1"/>
<rect x="290.6" y="83.6" width="9.8" height="17.6" fill="#fff"/>
<rect x="291" y="84" width="4.6" height="5.4" fill="#f2c66b"/>
<rect x="291" y="89.6" width="4.6" height="11.4" fill="#e2e2e2"/>
<path d="M295.6 84 V101 M291 89.4 H300 M291 95.4 H300" stroke="#a8a8a8" stroke-width="1" fill="none"/>
<rect x="290.6" y="83.6" width="9.8" height="17.6" fill="none" stroke="#777777" stroke-width="1"/>
<path d="M276 89 V98 H285" fill="none" stroke="#3c78b8" stroke-width="1.8"/>
<path d="M273 90.4 L276 87 L279 90.4 Z M284 95 L287.4 98 L284 101 Z" fill="#3c78b8"/></svg>
<svg width="984" height="567" viewBox="0 0 984 567" style="left:0;top:0;"><rect x="319.5" y="72.7" width="6.2" height="6.2" fill="#fff" stroke="#808080" stroke-width="1"/>
<path d="M322.6 73.2 V78.60000000000001 M320 75.8 H325.4" stroke="#808080" stroke-width="1" fill="none"/>
<rect x="328.5" y="81.1" width="6.2" height="6.2" fill="#fff" stroke="#808080" stroke-width="1"/>
<path d="M331.6 81.6 V87.0 M329 84.19999999999999 H334.4" stroke="#808080" stroke-width="1" fill="none"/>
<path d="M328 73.6 C330.4 73.8 331.8 75.2 331.8 77.4" fill="none" stroke="#3c78b8" stroke-width="1.2"/>
<path d="M329.8 76.4 L331.8 78.6 L333.8 76.4 Z" fill="#3c78b8" stroke="#3c78b8" stroke-width="0.5"/>
<path d="M325.8 86.6 C323.4 86.4 322.2 85 322.2 82.8" fill="none" stroke="#3c78b8" stroke-width="1.2"/>
<path d="M320.2 83.8 L322.2 81.6 L324.2 83.8 Z" fill="#3c78b8" stroke="#3c78b8" stroke-width="0.5"/>
<rect x="319.5" y="95.8" width="5.2" height="5.2" fill="#b9cfe8" stroke="#3c78b8" stroke-width="1"/>
<rect x="328.5" y="95.8" width="5.2" height="5.2" fill="#fff" stroke="#808080" stroke-width="1"/>
<rect x="319.5" y="104.7" width="5.2" height="5.2" fill="#fff" stroke="#808080" stroke-width="1"/>
<rect x="328.5" y="104.7" width="5.2" height="5.2" fill="#b9cfe8" stroke="#3c78b8" stroke-width="1"/>
<path d="M360.2 102 h5 l-2.5 3 z" fill="#666"/>
<rect x="386" y="73.5" width="14.5" height="12" fill="#fff"/>
<path d="M386 73.5 H400.5 V85.5 H389 L387 87.5 V85.5 H386 Z M386 77.5 H400.5 M386 81.5 H400.5 M391 73.5 V85.5 M396 73.5 V85.5" fill="none" stroke="#a0a0a0" stroke-width="1"/>
<path d="M385.8 87 L400.4 73.4" stroke="#f1f1f1" stroke-width="2.6"/>
<path d="M385.8 87 L400.4 73.4" stroke="#d8432e" stroke-width="1.1"/>
<path d="M476.4 79 h5 l-2.5 3 z" fill="#666"/>
<rect x="385.9" y="95.8" width="14.6" height="5.2" fill="#fff" stroke="#777777" stroke-width="1"/>
<path d="M389.6 98.5 H392.2 M394 98.5 H399" stroke="#909090" stroke-width="1"/>
<path d="M390.9 103.3 h4.6 l-2.3 2 z" fill="#3c78b8"/>
<rect x="385.9" y="106.2" width="14.6" height="4" fill="#fff" stroke="#777777" stroke-width="1"/>
<path d="M387.6 108.2 H389.8 M391.8 108.2 H394.4 M396.4 108.2 H398.8" stroke="#909090" stroke-width="1"/>
<rect x="388" y="119" width="12.5" height="12.2" fill="#fff"/>
<path d="M388 119.3 H400.5 V131.2 H394 M388 123.4 H400.5 M393 127.4 H400.5 M392.4 119.3 V123.4 M396.6 119.3 V131.2" fill="none" stroke="#999" stroke-width="1"/>
<path d="M386 127.6 L390.2 123.4 L394.4 127.6 L390.2 131.8 Z" fill="#fff" stroke="#555" stroke-width="1"/>
<path d="M389.4 125.6 V122.4 C389.4 121 391.8 121 391.8 122.4 V124.6" fill="none" stroke="#555" stroke-width="0.9"/>
<path d="M394.6 127.2 C395.4 128.4 395.8 129.4 395.4 130.4 C394.8 131 394 130.6 394 129.6 Z" fill="#e8833a"/>
<path d="M516.2 90.4 L510.8 99.6" stroke="#7a7a7a" stroke-width="1.9" fill="none"/>
<circle cx="520.5" cy="83.4" r="6.7" fill="#fff" stroke="#3c78b8" stroke-width="1.6"/>
<path d="M536.2 82.2 L528.6 94.6 L532 96.7 L539.6 84.3 Z" fill="#7a7a7a"/>
<path d="M537 80.8 L538.2 78.9 L541.6 81 L540.4 82.9 Z" fill="#7a7a7a"/>
<path d="M526.2 95.6 L530.8 97.4 L526.4 100.6 Z" fill="#3c78b8"/>
<path d="M544 130.2 h5 l-2.5 3 z" fill="#666"/>
<rect x="586.5" y="74.5" width="28" height="24.6" fill="#fff" stroke="#777777" stroke-width="1"/>
<path d="M593.50 75 V98.6 M600.50 75 V98.6 M607.50 75 V98.6 M587 79.50 H614 M587 84.50 H614 M587 89.50 H614 M587 94.50 H614 " fill="none" stroke="#a8a8a8" stroke-width="1"/>
<rect x="600.5" y="74.5" width="7.0" height="5.00" fill="#b9cfe8" stroke="#3c78b8" stroke-width="1"/>
<rect x="593.5" y="79.5" width="7.0" height="5.00" fill="#b9cfe8" stroke="#3c78b8" stroke-width="1"/>
<rect x="600.5" y="84.5" width="7.0" height="5.00" fill="#b9cfe8" stroke="#3c78b8" stroke-width="1"/>
<rect x="586.5" y="89.5" width="7.0" height="5.00" fill="#b9cfe8" stroke="#3c78b8" stroke-width="1"/>
<rect x="607.5" y="89.5" width="7.0" height="5.00" fill="#b9cfe8" stroke="#3c78b8" stroke-width="1"/>
<rect x="593.5" y="94.5" width="7.0" height="4.60" fill="#b9cfe8" stroke="#3c78b8" stroke-width="1"/>
<path d="M634 130.2 h5 l-2.5 3 z" fill="#666"/>
<path d="M654 74.2 H669 L663 80.8 V86.8 H659.8 V80.8 Z" fill="#8a8a8a"/>
<path d="M660.9 81 V86 H661.9 V81 Z" fill="#d0d0d0"/>
<path d="M702 79 h5 l-2.5 3 z" fill="#666"/>
<path d="M659.6 100.2 H656.4 A2.2 2.2 0 0 0 656.4 104.6 H659.6 M663.4 100.2 H666.6 A2.2 2.2 0 0 1 666.6 104.6 H663.4" fill="none" stroke="#d9603b" stroke-width="1.1"/>
<path d="M661.5 97 V100 M661.5 104.8 V107.8 M658.6 97.6 L660.2 99.8 M664.4 97.6 L662.8 99.8 M658.6 107.2 L660.2 105 M664.4 107.2 L662.8 105" fill="none" stroke="#d9603b" stroke-width="1"/>
<rect x="655" y="119" width="12.6" height="12.4" fill="#fff"/>
<rect x="655.4" y="119.4" width="8.2" height="6" fill="#3c78b8"/>
<path d="M655.4 122.4 H663.6 M659.5 119.4 V125.4" stroke="#cfe0f2" stroke-width="0.9"/>
<path d="M655.4 119.4 H667.6 V126 M655.4 119.4 V131.4 H661 M655.4 127.4 H661 M659.5 125.4 V131.4 M663.6 119.4 V125.6 M663.6 122.4 H667.6" fill="none" stroke="#8a8a8a" stroke-width="1"/>
<path d="M662.6 127.6 V126.4 C662.6 124.4 666.2 124.4 666.2 126.4 V127.6" fill="none" stroke="#f0c060" stroke-width="1.3"/>
<rect x="661" y="127.6" width="7" height="6" rx="0.6" fill="#f2c35b"/>
<rect x="664" y="129.4" width="1" height="2.4" fill="#fff"/>
<rect x="799.6" y="78.5" width="13" height="13" fill="#fff" stroke="#777777" stroke-width="1"/>
<rect x="802" y="81" width="8" height="2" fill="#3c78b8"/>
<rect x="802.2" y="84.3" width="1.8" height="1" fill="#8a8a8a"/>
<rect x="805.2" y="84.3" width="1.8" height="1" fill="#8a8a8a"/>
<rect x="808.2" y="84.3" width="1.8" height="1" fill="#8a8a8a"/>
<rect x="802.2" y="86.3" width="1.8" height="1" fill="#8a8a8a"/>
<rect x="805.2" y="86.3" width="1.8" height="1" fill="#8a8a8a"/>
<rect x="808.2" y="86.3" width="1.8" height="1" fill="#8a8a8a"/>
<rect x="802.2" y="88.3" width="1.8" height="1" fill="#8a8a8a"/>
<rect x="805.2" y="88.3" width="1.8" height="1" fill="#8a8a8a"/>
<rect x="808.2" y="88.3" width="1.8" height="1" fill="#8a8a8a"/>
<path d="M803 127 h5.4 l-2.7 3.1 z" fill="#666"/>
<rect x="849.5" y="78.5" width="15.4" height="13" fill="#fff" stroke="#777777" stroke-width="1"/>
<rect x="849" y="78" width="16.4" height="3" fill="#3c78b8"/>
<path d="M851.4 83.4 H862.8 M851.4 86.2 H858.4 M857.8 89.1 H860.2 M861 89.1 H862.8" stroke="#a0a0a0" stroke-width="1"/>
<path d="M853.6 127 h5.4 l-2.7 3.1 z" fill="#666"/></svg>
<svg width="984" height="567" viewBox="0 0 984 567" style="left:0;top:0;"><path d="M22.6 209.6 V221.4 H10.8 Z" fill="#b7b7b7"/>
<path d="M63 239.5 h7 l-3.5 3.6 z" fill="#505050"/>
<path d="M121.2 239.5 h7 l-3.5 3.6 z" fill="#505050"/>
<path d="M224 236.6 H232 L229.2 239.8 V244.4 H226.8 V239.8 Z" fill="#505050"/>
<path d="M220.2 242 h4.4 l-2.2 2.4 z" fill="#505050"/>
<path d="M32.4 525.8 V533.2 L27.8 529.5 Z" fill="#c3c3c3"/>
<path d="M56.8 525.8 V533.2 L61.4 529.5 Z" fill="#c3c3c3"/>
<circle cx="502" cy="530" r="7.6" fill="none" stroke="#7a7a7a" stroke-width="1.1"/>
<path d="M498 530 H506 M502 526 V534" stroke="#5a5a5a" stroke-width="1.7" fill="none"/>
<rect x="531.8" y="525.8000000000001" width="1.6" height="1.6" fill="#b4b4b4"/>
<rect x="531.8" y="529.4000000000001" width="1.6" height="1.6" fill="#b4b4b4"/>
<rect x="531.8" y="533.0" width="1.6" height="1.6" fill="#b4b4b4"/>
<path d="M558.6 526 V534 L553.8 530 Z" fill="#606060"/>
<path d="M954.4 526 V534 L959.2 530 Z" fill="#606060"/>
<path d="M968.4 216.6 H976.6 L972.5 211.8 Z" fill="#9a9a9a"/>
<path d="M968.4 506.8 H976.6 L972.5 511.6 Z" fill="#606060"/>
<rect x="189.5" y="551.5" width="9" height="8" fill="#fff" stroke="#555" stroke-width="1"/>
<path d="M189.5 554 H198.5 M192.4 554 V559.5 M195.4 554 V559.5 M189.5 556.8 H198.5" stroke="#555" stroke-width="0.9" fill="none"/>
<rect x="189" y="551" width="10" height="2.2" fill="#555"/>
<circle cx="189.4" cy="550.8" r="3.3" fill="#f1f1f1"/>
<circle cx="189.4" cy="550.8" r="2.5" fill="#555"/>
<rect x="698.6" y="548.6" width="12" height="12" fill="#e4e4e4" stroke="#666" stroke-width="1.2"/>
<path d="M702.6 548.6 V560.6 M706.6 548.6 V560.6 M698.6 552.6 H710.6 M698.6 556.6 H710.6" stroke="#666" stroke-width="1.2" fill="none"/>
<rect x="736.7" y="548.6" width="12.8" height="12" fill="none" stroke="#666" stroke-width="1.2"/>
<rect x="739.9" y="551" width="6.4" height="7.4" fill="none" stroke="#666" stroke-width="1"/>
<path d="M741.4 553.2 H744.8 M741.4 554.8 H744.8 M741.4 556.4 H744.8" stroke="#666" stroke-width="0.8" fill="none"/>
<rect x="774.7" y="548.6" width="12.6" height="12" fill="none" stroke="#666" stroke-width="1.2"/>
<path d="M774.7 555.6 H782.6 V548.6 M778.6 548.6 V555.6" stroke="#666" stroke-width="1.1" fill="none"/>
<rect x="805.2" y="554.2" width="5.8" height="1.8" fill="#555"/>
<rect x="815" y="554.6" width="99" height="1" fill="#a0a0a0"/>
<rect x="863" y="549" width="4" height="11" fill="#555"/>
<path d="M918.6 555.1 H925 M921.8 551.9 V558.3" stroke="#555" stroke-width="1.8" fill="none"/></svg>
<span class="t" style="left:224.00px;top:175.60px;font-size:13px;color:#555;transform:scaleX(0.8889);font-family:'Liberation Serif',serif;font-style:italic;font-weight:bold;">fx</span>
<div class="r" style="left:0px;top:0px;width:1px;height:567px;background:#217346;"></div>
<div class="r" style="left:1px;top:66px;width:1px;height:501px;background:#e9efeb;"></div>
<div class="r" style="left:983px;top:0px;width:1px;height:567px;background:#217346;"></div>
<div class="r" style="left:982px;top:66px;width:1px;height:501px;background:#c9dbd0;"></div>
<div class="r" style="left:0px;top:566px;width:984px;height:1px;background:#217346;"></div>
<div class="r" style="left:0px;top:565px;width:984px;height:1px;background:#c9dbd0;"></div>
</body></html>
